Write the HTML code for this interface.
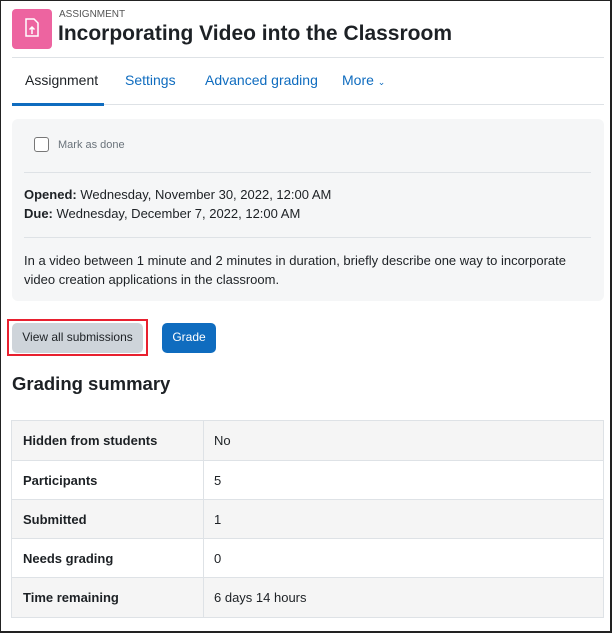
<!DOCTYPE html><html><head><style>
*{box-sizing:border-box;margin:0;padding:0}
body{width:612px;height:633px;border:1px solid #222;border-width:1px 2px 2px 1px;font-family:"Liberation Sans",sans-serif;color:#1d2125;position:relative;overflow:hidden;background:#fff}
.a{position:absolute}
</style></head><body>
<div class="a" style="left:11px;top:8px;width:40px;height:40px;background:#ed64a0;border-radius:4px"></div>
<svg class="a" style="left:23px;top:17px" width="16" height="20" viewBox="0 0 16 20"><path d="M2 1h8l4 4v13H2z" fill="none" stroke="#fff" stroke-width="1.5"/><path d="M8 16V9M5.5 11.5L8 9l2.5 2.5" fill="none" stroke="#fff" stroke-width="1.5"/></svg>
<div class="a" style="left:58px;top:8px;font-size:10px;color:#555">ASSIGNMENT</div>
<div class="a" style="left:57px;top:21px;font-size:21px;font-weight:bold;color:#1d2125">Incorporating Video into the Classroom</div>
<div class="a" style="left:11px;top:56px;width:592px;height:1px;background:#dee2e6"></div>
<div class="a" style="left:24px;top:71px;font-size:14px;color:#1d2125">Assignment</div>
<div class="a" style="left:124px;top:71px;font-size:14px;color:#0f6cbf">Settings</div>
<div class="a" style="left:204px;top:71px;font-size:14px;color:#0f6cbf">Advanced grading</div>
<div class="a" style="left:341px;top:71px;font-size:14px;color:#0f6cbf">More <span style="font-size:9px">&#8964;</span></div>
<div class="a" style="left:11px;top:103px;width:592px;height:1px;background:#dee2e6"></div>
<div class="a" style="left:11px;top:102px;width:92px;height:3px;background:#0f6cbf"></div>
<div class="a" style="left:11px;top:118px;width:592px;height:182px;background:#f5f6f7;border-radius:6px"></div>
<div class="a" style="left:33px;top:136px;width:15px;height:15px;border:1.5px solid #777;border-radius:3px;background:#fff"></div>
<div class="a" style="left:57px;top:138px;font-size:11px;color:#6a737b">Mark as done</div>
<div class="a" style="left:23px;top:171px;width:567px;height:1px;background:#dee2e6"></div>
<div class="a" style="left:23px;top:186px;font-size:13px"><b>Opened:</b> Wednesday, November 30, 2022, 12:00 AM</div>
<div class="a" style="left:23px;top:205px;font-size:13px"><b>Due:</b> Wednesday, December 7, 2022, 12:00 AM</div>
<div class="a" style="left:23px;top:236px;width:567px;height:1px;background:#dee2e6"></div>
<div class="a" style="left:23px;top:250px;font-size:13px;line-height:19px;width:550px">In a video between 1 minute and 2 minutes in duration, briefly describe one way to incorporate video creation applications in the classroom.</div>
<div class="a" style="left:6px;top:318px;width:141px;height:37px;border:2px solid #e8202f"></div>
<div class="a" style="left:11px;top:322px;width:131px;height:30px;background:#ced4da;border-radius:5px;font-size:12px;text-align:center;line-height:28px">View all submissions</div>
<div class="a" style="left:161px;top:322px;width:54px;height:30px;background:#0f6cbf;border-radius:5px;font-size:12px;color:#fff;text-align:center;line-height:28px">Grade</div>
<div class="a" style="left:11px;top:372px;font-size:18.5px;font-weight:bold">Grading summary</div>
<table class="a" style="left:10px;top:419px;width:593px;border-collapse:collapse;font-size:13px">
<tr style="background:#f5f5f5;height:40px"><td style="border:1px solid #dee2e6;width:192px;padding-left:11px;font-weight:bold">Hidden from students</td><td style="border:1px solid #dee2e6;padding-left:10px">No</td></tr>
<tr style="height:39px"><td style="border:1px solid #dee2e6;padding-left:11px;font-weight:bold">Participants</td><td style="border:1px solid #dee2e6;padding-left:10px">5</td></tr>
<tr style="background:#f5f5f5;height:39px"><td style="border:1px solid #dee2e6;padding-left:11px;font-weight:bold">Submitted</td><td style="border:1px solid #dee2e6;padding-left:10px">1</td></tr>
<tr style="height:39px"><td style="border:1px solid #dee2e6;padding-left:11px;font-weight:bold">Needs grading</td><td style="border:1px solid #dee2e6;padding-left:10px">0</td></tr>
<tr style="background:#f5f5f5;height:40px"><td style="border:1px solid #dee2e6;padding-left:11px;font-weight:bold">Time remaining</td><td style="border:1px solid #dee2e6;padding-left:10px">6 days 14 hours</td></tr>
</table>
</body></html>
